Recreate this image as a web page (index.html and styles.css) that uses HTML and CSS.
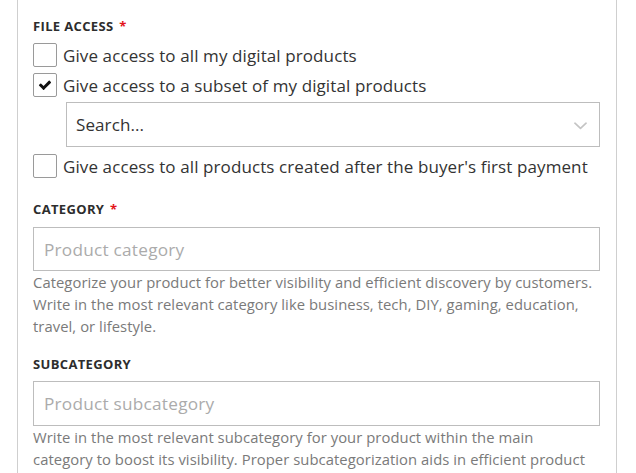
FILE: index.html
```html
<!DOCTYPE html>
<html lang="en">
<head>
<meta charset="utf-8">
<title>Product form</title>
<link rel="stylesheet" href="styles.css">
</head>
<body>
<div class="card">
  <section class="field field-access">
    <div class="label">FILE ACCESS <span class="req">*</span></div>
    <label class="check check-1"><span class="box"></span><span class="opt">Give access to all my digital products</span></label>
    <label class="check check-2"><span class="box"><svg viewBox="0 0 1792 1792" width="14" height="14"><path d="M1671 566q0 40-28 68l-724 724-136 136q-28 28-68 28t-68-28l-136-136-362-362q-28-28-28-68t28-68l136-136q28-28 68-28t68 28l294 295 656-657q28-28 68-28t68 28l136 136q28 28 28 68z" fill="#111"/></svg></span><span class="opt">Give access to a subset of my digital products</span></label>
    <div class="select"><span class="select-text">Search...</span><svg class="chev" viewBox="0 0 14 8" width="13" height="8"><path d="M1 1 L7 6.5 L13 1" fill="none" stroke="#c4c4c4" stroke-width="1.8" stroke-linecap="round" stroke-linejoin="round"/></svg></div>
    <label class="check check-3"><span class="box"></span><span class="opt">Give access to all products created after the buyer's first payment</span></label>
  </section>
  <section class="field field-cat">
    <div class="label">CATEGORY <span class="req">*</span></div>
    <div class="input"><span class="ph">Product category</span></div>
    <p class="help">Categorize your product for better visibility and efficient discovery by customers. Write in the most relevant category like business, tech, DIY, gaming, education, travel, or lifestyle.</p>
  </section>
  <section class="field field-sub">
    <div class="label">SUBCATEGORY</div>
    <div class="input input-sub"><span class="ph">Product subcategory</span></div>
    <p class="help">Write in the most relevant subcategory for your product within the main category to boost its visibility. Proper subcategorization aids in efficient product discovery.</p>
  </section>
</div>
</body>
</html>
```
FILE: styles.css
```css
html, body {
  margin: 0;
  padding: 0;
  background: #fff;
  overflow: hidden;
}
body {
  font-family: "Open Sans", "DejaVu Sans", sans-serif;
  color: #333;
}
.card {
  margin-left: 17px;
  width: 600px;
  box-sizing: border-box;
  border-left: 1px solid #cfcfcf;
  border-right: 1px solid #cfcfcf;
  padding: 18px 16px 20px 15px;
  min-height: 480px;
}
.label {
  font-size: 13px;
  line-height: 16px;
  font-weight: 700;
  color: #2d2d2d;
  letter-spacing: 0.35px;
}
.req {
  color: #e3141b;
  margin-left: 2px;
}
.check {
  display: flex;
  align-items: center;
  gap: 6px;
  height: 24px;
}
.check-1 { margin-top: 9px; }
.check-2 { margin-top: 6px; }
.check-3 { margin-top: 7px; }
.box {
  width: 24px;
  height: 24px;
  box-sizing: border-box;
  border: 1px solid #9a9a9a;
  border-radius: 2px;
  display: flex;
  align-items: center;
  justify-content: center;
  flex: none;
}
.box svg { display: block; }
.opt {
  font-size: 17px;
  letter-spacing: 0.1px;
  color: #333;
  white-space: nowrap;
}
.select {
  margin: 5px 0 0 33px;
  height: 45px;
  box-sizing: border-box;
  border: 1px solid #bdbdbd;
  display: flex;
  align-items: center;
  justify-content: space-between;
  padding: 0 12px 0 9px;
}
.select-text {
  font-size: 17px;
  letter-spacing: 0.1px;
  color: #333;
}
.chev { display: block; margin-top: 2px; }
.field-cat { margin-top: 23px; }
.field-sub { margin-top: 19px; }
.input {
  margin-top: 10px;
  height: 44px;
  box-sizing: border-box;
  border: 1px solid #bdbdbd;
  display: flex;
  align-items: center;
  padding: 0 10px;
}
.input-sub {
  margin-top: 9px;
  height: 45px;
}
.ph {
  font-size: 17.2px;
  letter-spacing: 0.25px;
  color: #ababab;
}
.help {
  margin: 0;
  max-width: 562px;
  font-size: 14.8px;
  letter-spacing: 0.06px;
  line-height: 22px;
  color: #7a7a7a;
}
```
